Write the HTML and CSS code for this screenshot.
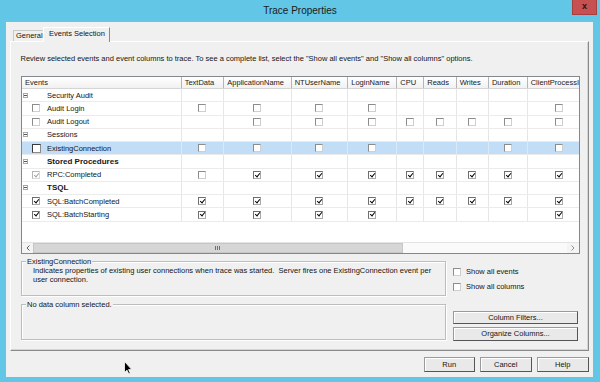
FILE: index.html
```html
<!DOCTYPE html>
<html>
<head>
<meta charset="utf-8">
<title>Trace Properties</title>
<link rel="stylesheet" href="styles.css">
</head>
<body>
<div class="window">
  <div class="titlebar">Trace Properties<span class="close">x</span></div>
  <div class="client">
    <div class="tabs">
      <div class="tab">General</div>
      <div class="tab active">Events Selection</div>
    </div>
    <div class="panel">
      <div class="desc">Review selected events and event columns to trace. To see a complete list, select the "Show all events" and "Show all columns" options.</div>
      <div class="grid">
        <div class="thead">
          <div class="th">Events</div>
          <div class="th">TextData</div>
          <div class="th">ApplicationName</div>
          <div class="th">NTUserName</div>
          <div class="th">LoginName</div>
          <div class="th">CPU</div>
          <div class="th">Reads</div>
          <div class="th">Writes</div>
          <div class="th">Duration</div>
          <div class="th">ClientProcessID</div>
        </div>
        <div class="row">
          <div class="td ev"><span class="tw"></span><span class="name">Security Audit</span></div>
          <div class="td"></div><div class="td"></div><div class="td"></div><div class="td"></div><div class="td"></div><div class="td"></div><div class="td"></div><div class="td"></div><div class="td"></div>
        </div>
        <div class="row">
          <div class="td ev"><span class="cb"></span><span class="name">Audit Login</span></div>
          <div class="td"><span class="cb"></span></div>
          <div class="td"><span class="cb"></span></div>
          <div class="td"><span class="cb"></span></div>
          <div class="td"><span class="cb"></span></div>
          <div class="td"></div>
          <div class="td"></div>
          <div class="td"></div>
          <div class="td"></div>
          <div class="td"><span class="cb"></span></div>
        </div>
        <div class="row">
          <div class="td ev"><span class="cb"></span><span class="name">Audit Logout</span></div>
          <div class="td"></div>
          <div class="td"><span class="cb"></span></div>
          <div class="td"><span class="cb"></span></div>
          <div class="td"><span class="cb"></span></div>
          <div class="td"><span class="cb"></span></div>
          <div class="td"><span class="cb"></span></div>
          <div class="td"><span class="cb"></span></div>
          <div class="td"><span class="cb"></span></div>
          <div class="td"><span class="cb"></span></div>
        </div>
        <div class="row">
          <div class="td ev"><span class="tw"></span><span class="name">Sessions</span></div>
          <div class="td"></div><div class="td"></div><div class="td"></div><div class="td"></div><div class="td"></div><div class="td"></div><div class="td"></div><div class="td"></div><div class="td"></div>
        </div>
        <div class="row selected">
          <div class="td ev"><span class="cb focus"></span><span class="name">ExistingConnection</span></div>
          <div class="td"><span class="cb"></span></div>
          <div class="td"><span class="cb"></span></div>
          <div class="td"><span class="cb"></span></div>
          <div class="td"><span class="cb"></span></div>
          <div class="td"></div>
          <div class="td"></div>
          <div class="td"></div>
          <div class="td"><span class="cb"></span></div>
          <div class="td"><span class="cb"></span></div>
        </div>
        <div class="row">
          <div class="td ev"><span class="tw"></span><span class="name bold">Stored Procedures</span></div>
          <div class="td"></div><div class="td"></div><div class="td"></div><div class="td"></div><div class="td"></div><div class="td"></div><div class="td"></div><div class="td"></div><div class="td"></div>
        </div>
        <div class="row">
          <div class="td ev"><span class="cb on dim"></span><span class="name">RPC:Completed</span></div>
          <div class="td"><span class="cb"></span></div>
          <div class="td"><span class="cb on"></span></div>
          <div class="td"><span class="cb on"></span></div>
          <div class="td"><span class="cb on"></span></div>
          <div class="td"><span class="cb on"></span></div>
          <div class="td"><span class="cb on"></span></div>
          <div class="td"><span class="cb on"></span></div>
          <div class="td"><span class="cb on"></span></div>
          <div class="td"><span class="cb on"></span></div>
        </div>
        <div class="row">
          <div class="td ev"><span class="tw"></span><span class="name bold">TSQL</span></div>
          <div class="td"></div><div class="td"></div><div class="td"></div><div class="td"></div><div class="td"></div><div class="td"></div><div class="td"></div><div class="td"></div><div class="td"></div>
        </div>
        <div class="row">
          <div class="td ev"><span class="cb on"></span><span class="name">SQL:BatchCompleted</span></div>
          <div class="td"><span class="cb on"></span></div>
          <div class="td"><span class="cb on"></span></div>
          <div class="td"><span class="cb on"></span></div>
          <div class="td"><span class="cb on"></span></div>
          <div class="td"><span class="cb on"></span></div>
          <div class="td"><span class="cb on"></span></div>
          <div class="td"><span class="cb on"></span></div>
          <div class="td"><span class="cb on"></span></div>
          <div class="td"><span class="cb on"></span></div>
        </div>
        <div class="row">
          <div class="td ev"><span class="cb on"></span><span class="name">SQL:BatchStarting</span></div>
          <div class="td"><span class="cb on"></span></div>
          <div class="td"><span class="cb on"></span></div>
          <div class="td"><span class="cb on"></span></div>
          <div class="td"><span class="cb on"></span></div>
          <div class="td"></div>
          <div class="td"></div>
          <div class="td"></div>
          <div class="td"></div>
          <div class="td"><span class="cb on"></span></div>
        </div>
        <div class="spacer"></div>
        <div class="hscroll">
          <div class="arrow"><svg width="4" height="6" viewBox="0 0 4 6"><path d="M3.5 0.5 L1 3 L3.5 5.5" fill="none" stroke="#606060" stroke-width="1"/></svg></div>
          <div class="thumb"><svg width="6" height="4" viewBox="0 0 6 4"><path d="M0.5 0 V4 M2.5 0 V4 M4.5 0 V4" stroke="#707070" stroke-width="1"/></svg></div>
          <div class="track"></div>
          <div class="arrow right"><svg width="4" height="6" viewBox="0 0 4 6"><path d="M0.5 0.5 L3 3 L0.5 5.5" fill="none" stroke="#909090" stroke-width="1"/></svg></div>
        </div>
      </div>
      <div class="bottom">
        <div class="group">
          <span class="group-title">ExistingConnection</span>
          <div class="group-text">Indicates properties of existing user connections when trace was started.&nbsp; Server fires one ExistingConnection event per<br>user connection.</div>
        </div>
        <div class="options">
          <label class="opt"><span class="cb"></span>Show all events</label>
          <label class="opt"><span class="cb"></span>Show all columns</label>
        </div>
        <div class="group">
          <span class="group-title">No data column selected.</span>
        </div>
        <div class="side-buttons">
          <div class="btn">Column Filters...</div>
          <div class="btn">Organize Columns...</div>
        </div>
      </div>
    </div>
    <div class="actions">
      <div class="btn run">Run</div>
      <div class="btn">Cancel</div>
      <div class="btn">Help</div>
    </div>
  </div>
</div>
<svg class="cursor" width="9" height="14" viewBox="0 0 9 14"><path d="M0.5 0.5 L0.5 11.5 L3 9.2 L4.8 13 L6.3 12.3 L4.6 8.6 L7.8 8.6 Z" fill="#000" stroke="#fff" stroke-width="0.8"/></svg>
</body>
</html>
```
FILE: styles.css
```css
* { box-sizing: border-box; }
html, body { margin: 0; padding: 0; }
body {
  width: 600px;
  height: 382px;
  overflow: hidden;
  position: relative;
  background: #62C6E6;
  font-family: "Liberation Sans", Arial, sans-serif;
  font-size: 7.5px;
  color: #151515;
}
.window { height: 382px; display: flex; flex-direction: column; }
.titlebar {
  height: 22px;
  position: relative;
  text-align: center;
  line-height: 22px;
  font-size: 10px;
  color: #1b1b1b;
}
.close {
  position: absolute;
  top: 0;
  right: 3px;
  width: 25px;
  height: 15px;
  background: #C75050;
  border: 1px solid #A64040;
  border-top: none;
  color: #2a1414;
  font-weight: bold;
  font-size: 9px;
  line-height: 13px;
  text-align: center;
}
.client {
  flex: 1;
  margin: 0 7px 5px 6px;
  background: #F0F0F0;
  display: flex;
  flex-direction: column;
}
.tabs {
  height: 20px;
  display: flex;
  align-items: flex-end;
  padding-left: 7px;
  position: relative;
  z-index: 1;
}
.tab {
  height: 11px;
  margin-bottom: 1px;
  width: 30px;
  padding-left: 2px;
  line-height: 10px;
  border: 1px solid #C9C9C9;
  border-bottom: none;
  border-right: none;
  background: #F0F0F0;
  white-space: nowrap;
}
.tab.active {
  height: 15px;
  margin-bottom: 0;
  width: 67px;
  padding-left: 5px;
  line-height: 12px;
  border-color: #FFFFFF;
  border-right: 1px solid #8A8A8A;
}
.panel {
  margin: -1px 0 0 4px;
  width: 579px;
  height: 310px;
  border: 1px solid;
  border-color: #FFFFFF #8A8A8A #8A8A8A #FFFFFF;
  box-shadow: inset -1px -1px #D4D4D4;
}
.desc {
  margin: 11.5px 0 0 9.5px;
  line-height: 9px;
  white-space: nowrap;
}
.grid {
  margin: 13.5px 0 0 10px;
  width: 559px;
  height: 178px;
  border: 1px solid #828790;
  background: #FFFFFF;
  display: flex;
  flex-direction: column;
  overflow: hidden;
}
.thead, .row {
  display: grid;
  grid-template-columns: 159.7px 42.6px 67.4px 56.6px 49px 27px 32.4px 32.3px 38.7px 64px;
  flex: none;
}
.thead {
  height: 12px;
  background: linear-gradient(#FFFFFF, #F1F1F1);
  border-bottom: 1px solid #D5D5D5;
}
.th {
  border-right: 1px solid #B5B5B5;
  padding-left: 3px;
  line-height: 11px;
  white-space: nowrap;
  overflow: hidden;
  color: #1a1a1a;
}
.row {
  height: 13.27px;
  border-bottom: 1px solid #EBEBEB;
}
.row.selected { background: #C2DEF7; }
.td {
  border-right: 1px solid #E6E6E6;
  display: flex;
  align-items: center;
  justify-content: center;
}
.row.selected .td { border-right-color: #D8E9F9; }
.td.ev {
  display: grid;
  grid-template-columns: 10px 15px 1fr;
  align-items: center;
  justify-content: stretch;
}
.td.ev .tw { grid-column: 1; margin-left: 1px; }
.td.ev .cb { grid-column: 2; }
.td.ev .name { grid-column: 3; white-space: nowrap; }
.name.bold { font-weight: bold; font-size: 8px; }
.tw {
  width: 5px;
  height: 5px;
  border: 1px solid #A8A8A8;
  position: relative;
  background: #FFFFFF;
}
.tw::after {
  content: "";
  position: absolute;
  left: 0;
  top: 1px;
  width: 3px;
  height: 1px;
  background: #555555;
}
.cb {
  display: inline-block;
  width: 8px;
  height: 8px;
  border: 1px solid;
  border-color: #8C8C8C #CFCFCF #CFCFCF #8C8C8C;
  background: #FFFFFF;
  position: relative;
  flex: none;
}
.cb.on { border-color: #6E6E6E #A9A9A9 #A9A9A9 #6E6E6E; }
.cb.on::after {
  content: "";
  position: absolute;
  left: 1.8px;
  top: -0.2px;
  width: 2px;
  height: 4.2px;
  border: solid #000000;
  border-width: 0 1.5px 1.5px 0;
  transform: rotate(40deg);
}
.cb.dim { border-color: #B5B5B5 #DADADA #DADADA #B5B5B5; }
.cb.dim::after { border-color: #A0A0A0; }
.cb.focus {
  width: 9px;
  height: 9px;
  border-color: #3A3A3A #8A8A8A #8A8A8A #3A3A3A;
}
.spacer { flex: 1; }
.hscroll {
  height: 11px;
  flex: none;
  display: flex;
  background: #F4F4F4;
  border-top: 1px solid #E4E4E4;
}
.arrow {
  width: 11px;
  display: flex;
  align-items: center;
  justify-content: center;
  background: #F4F4F4;
}
.arrow.right { width: 12px; }
.thumb {
  width: 370px;
  background: #D6D6D6;
  border: 1px solid #C6C6C6;
  display: flex;
  align-items: center;
  justify-content: center;
}
.track { flex: 1; background: #FAFAFA; }
.bottom {
  display: grid;
  grid-template-columns: 425px 125px;
  grid-template-rows: 35px 36px;
  column-gap: 7px;
  row-gap: 8px;
  margin: 7px 0 0 10px;
}
.group {
  position: relative;
  border: 1px solid #BDBDBD;
  box-shadow: inset 1px 1px #FFFFFF, 1px 1px #FFFFFF;
}
.group-title {
  position: absolute;
  top: -5px;
  left: 4px;
  padding: 0 1px;
  background: #F0F0F0;
  line-height: 9px;
  white-space: nowrap;
}
.group-text {
  padding: 3.5px 0 0 11px;
  line-height: 9.5px;
  white-space: nowrap;
}
.options { padding-top: 3px; }
.opt {
  height: 15px;
  display: flex;
  align-items: center;
  gap: 5px;
}
.side-buttons {
  padding-top: 6.5px;
  display: flex;
  flex-direction: column;
  gap: 3px;
}
.btn {
  height: 13.5px;
  background: #E9E9E9;
  border: 1px solid;
  border-color: #9A9A9A #555555 #555555 #9A9A9A;
  box-shadow: inset 1px 1px #FFFFFF;
  text-align: center;
  line-height: 11.5px;
  white-space: nowrap;
}
.actions {
  display: flex;
  justify-content: flex-end;
  gap: 5px;
  margin: 5.7px 4.3px 0 0;
}
.actions .btn {
  height: 15px;
  width: 52px;
  line-height: 13px;
}
.actions .btn.run { width: 51px; }
.cursor {
  position: absolute;
  left: 124px;
  top: 361px;
}
```
